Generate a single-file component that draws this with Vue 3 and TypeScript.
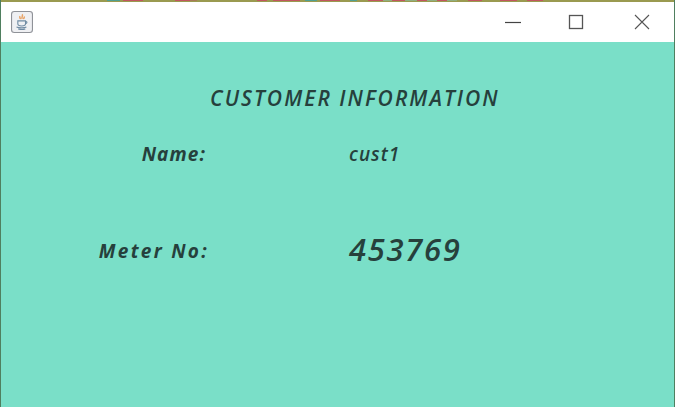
<script setup lang="ts">
const title = "CUSTOMER INFORMATION";
const rows = [
  { label: "Name:", value: "cust1", big: false },
  { label: "Meter No:", value: "453769", big: true },
];
const olive = "#9a9a50";
const red = "#c2565f";
const teal = "#4f9f90";
const stripes = [
  { w: 107, c: olive }, { w: 13, c: teal }, { w: 3, c: olive }, { w: 20, c: red },
  { w: 32, c: olive }, { w: 15, c: red }, { w: 7, c: "#a87a58" }, { w: 60, c: olive },
  { w: 10, c: red }, { w: 6, c: olive }, { w: 27, c: red }, { w: 5, c: olive },
  { w: 12, c: teal }, { w: 3, c: olive }, { w: 20, c: red }, { w: 10, c: olive },
  { w: 7, c: teal }, { w: 11, c: olive }, { w: 15, c: red }, { w: 9, c: "#8fae80" },
  { w: 13, c: red }, { w: 12, c: "#8fae80" }, { w: 10, c: red }, { w: 10, c: "#8fae80" },
  { w: 10, c: red }, { w: 10, c: "#8fae80" }, { w: 11, c: olive }, { w: 14, c: red },
  { w: 18, c: olive }, { w: 17, c: red }, { w: 10, c: olive }, { w: 16, c: red },
  { w: 132, c: olive },
];
</script>

<template>
  <div class="window">
    <div class="edge">
      <span v-for="(s, i) in stripes" :key="i" :style="{ width: s.w + 'px', background: s.c }"></span>
    </div>
    <header class="titlebar">
      <div class="app-icon">
        <svg width="22" height="22" viewBox="0 0 20 20">
          <rect x="0.5" y="0.5" width="19" height="19" rx="2.5" fill="#eff0f3" stroke="#8f9298" />
          <path d="M10 3c1.6 1.4-1 2.4.2 4.2M8.2 4.6c-.8 1.2.4 1.8.2 2.8M11.8 5c.8 1-.4 1.6-.3 2.4" fill="none" stroke="#e8a468" stroke-width="1.4" />
          <path d="M6.2 9h7v2.6c0 1.4-1.2 2-3.5 2s-3.5-.6-3.5-2z" fill="none" stroke="#6f8ba3" stroke-width="1" />
          <path d="M13.2 9.6c1.6-.3 2 1.5-.2 2M5 14.6c2.5 1 7 1 9 0M6.5 16.4c2 .5 5 .5 6.5 0" fill="none" stroke="#6f8ba3" stroke-width="1" />
        </svg>
      </div>
      <div class="controls">
        <svg class="ctl ctl-min" width="16" height="16" viewBox="0 0 16 16"><path d="M0 8.5h16" stroke="#444" stroke-width="1.2" /></svg>
        <svg class="ctl ctl-max" width="16" height="16" viewBox="0 0 16 16"><rect x="1.5" y="1.5" width="13" height="13" fill="none" stroke="#555" stroke-width="1.3" /></svg>
        <svg class="ctl" width="16" height="16" viewBox="0 0 16 16"><path d="M1 1l14 14M15 1L1 15" stroke="#555" stroke-width="1.1" /></svg>
      </div>
    </header>
    <main class="content">
      <h1 class="title">{{ title }}</h1>
      <div v-for="r in rows" :key="r.label" class="row">
        <span class="label">{{ r.label }}</span>
        <span class="value" :class="{ big: r.big }">{{ r.value }}</span>
      </div>
    </main>
  </div>
</template>

<style>
html, body { margin: 0; background: #7adfc8; }
</style>

<style scoped>
.window {
  width: 675px;
  height: 407px;
  display: flex;
  flex-direction: column;
  overflow: hidden;
  box-sizing: border-box;
  background: #7adfc8;
  border-left: 1px solid #4f7f5f;
  border-right: 1px solid #4f7f5f;
  font-family: "Open Sans", sans-serif;
  color: #26403c;
}
.edge {
  height: 1px;
  flex: none;
  display: flex;
  margin: 0 -1px;
  border-bottom: 1px solid #9a9a50;
}
.edge span { flex: none; height: 1px; }
.titlebar {
  height: 40px;
  flex: none;
  background: #fff;
  display: flex;
  align-items: center;
  justify-content: space-between;
  padding: 0 24px 0 10px;
}
.app-icon { display: flex; }
.controls { display: flex; margin-bottom: 1px; }
.ctl { display: block; }
.ctl-min { margin-right: 47px; }
.ctl-max { margin-right: 50px; }
.content {
  flex: 1;
  display: flex;
  flex-direction: column;
  padding-top: 43px;
}
.title {
  margin: 0 0 0 209px;
  font: italic 600 21px/26px "Open Sans", sans-serif;
  letter-spacing: 2.05px;
  white-space: nowrap;
}
.row {
  display: grid;
  grid-template-columns: 207px 1fr;
  align-items: center;
  white-space: nowrap;
}
.row:nth-of-type(1) { margin-top: 29px; }
.row:nth-of-type(2) { margin-top: 61px; }
.row:nth-of-type(1) .label { margin-right: 2px; }
.label {
  justify-self: end;
  font: italic 700 19px/28px "Open Sans", sans-serif;
  letter-spacing: 1.1px;
}
.row:nth-of-type(2) .label { letter-spacing: 2.3px; margin-top: 4px; margin-right: -1px; }
.value {
  margin-left: 141px;
  font: italic 600 19px/28px "Open Sans", sans-serif;
  letter-spacing: 1px;
}
.value.big {
  font-size: 31px;
  line-height: 40px;
  font-weight: 600;
  letter-spacing: 1.7px;
}
</style>
